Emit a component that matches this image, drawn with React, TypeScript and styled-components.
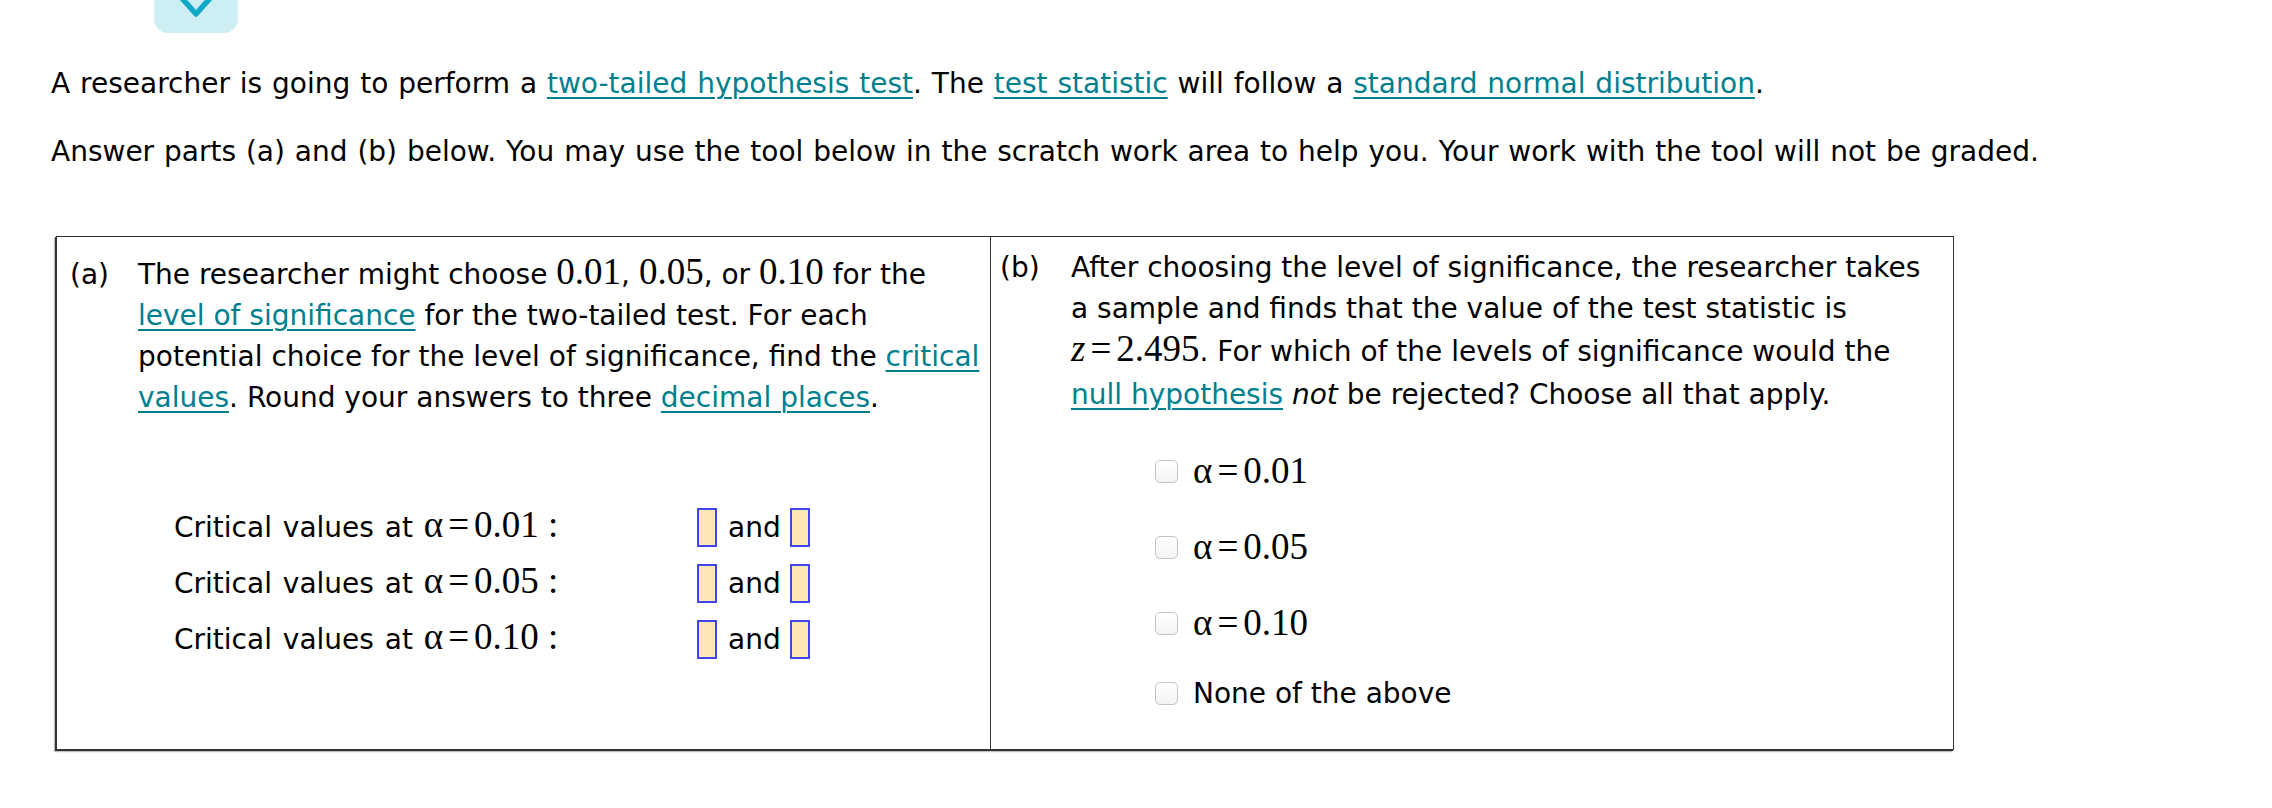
import React from 'react';
import styled, { createGlobalStyle } from 'styled-components';

const GlobalStyle = createGlobalStyle`
    html, body {
        margin: 0;
        padding: 0;
        background: #ffffff;
    }
    body {
        font-family: "DejaVu Sans", Verdana, sans-serif;
        color: #000000;
    }
`;

const Page = styled.div`
    width: 2272px;
    height: 808px;
    overflow: hidden;
    box-sizing: border-box;
    padding-left: 51px;
    font-size: 28px;
`;

const CollapseButton = styled.div`
    width: 84px;
    height: 33px;
    margin-left: 103px;
    background: #cdeef3;
    border-radius: 0 0 14px 14px;
    display: flex;
    justify-content: center;
    align-items: flex-start;
`;

const Intro = styled.p`
    margin: ${({ $top }: { $top: number }) => `${$top}px`} 0 0;
    line-height: 40px;
    white-space: nowrap;
    word-spacing: 1px;
`;

const Link = styled.span`
    color: #00808f;
    text-decoration: underline;
    text-decoration-thickness: 2px;
    text-underline-offset: 4px;
`;

const Math = styled.span`
    font-family: "Liberation Serif", "Times New Roman", serif;
    font-size: 37px;
    line-height: 0;
    word-spacing: 0;
    & > i {
        font-style: italic;
    }
`;

const Eq = styled.span`
    margin: 0 5px;
`;

const Table = styled.div`
    margin: 64px 0 0 5px;
    width: 1898px;
    height: 514px;
    box-sizing: border-box;
    display: grid;
    grid-template-columns: 933px 1fr;
    border: 1px solid #333333;
    box-shadow: -1px 1px 0 #333333, -2px 2px 1px rgba(0, 0, 0, 0.25);
`;

const Cell = styled.div`
    box-sizing: border-box;
    padding: ${({ $top, $left }: { $top: number; $left: number }) => `${$top}px 0 0 ${$left}px`};
    & + & {
        border-left: 1px solid #333333;
    }
`;

const Part = styled.div`
    display: flex;
    align-items: flex-start;
`;

const PartLabel = styled.div`
    width: ${({ $w }: { $w: number }) => `${$w}px`};
    flex-shrink: 0;
    height: 41px;
    line-height: 41px;
`;

const Line = styled.div`
    height: ${({ $h }: { $h?: number }) => `${$h ?? 41}px`};
    line-height: ${({ $h }: { $h?: number }) => `${$h ?? 41}px`};
    white-space: nowrap;
`;

const Rows = styled.div`
    margin: 81px 0 0 104px;
    display: flex;
    flex-direction: column;
`;

const Row = styled.div`
    height: 56px;
    display: grid;
    grid-template-columns: 523px auto;
    align-items: center;
    white-space: nowrap;
    word-spacing: 2px;
`;

const Pair = styled.div`
    display: flex;
    align-items: center;
    word-spacing: 0;
`;

const AnswerBox = styled.span`
    display: inline-block;
    width: 20px;
    height: 39px;
    box-sizing: border-box;
    border: 2px solid #3d45ee;
    background: #fde8b4;
`;

const And = styled.span`
    margin: 0 9px 0 11px;
`;

const Options = styled.div`
    margin: 18px 0 0 155px;
    display: flex;
    flex-direction: column;
`;

const Option = styled.label`
    height: ${({ $h }: { $h: number }) => `${$h}px`};
    display: flex;
    align-items: center;
    gap: 15px;
    white-space: nowrap;
`;

const Check = styled.span`
    width: 23px;
    height: 23px;
    box-sizing: border-box;
    border: 1px solid #c4c4c4;
    border-radius: 5px;
    background: linear-gradient(#ffffff, #f3f3f3);
    flex-shrink: 0;
`;

function Alpha({ value, colon }: { value: string; colon?: boolean }) {
    return (
        <Math>
            α<Eq>=</Eq>{value}{colon ? ' :' : ''}
        </Math>
    );
}

export default function App() {
    const levels = ['0.01', '0.05', '0.10'];
    return (
        <Page>
            <GlobalStyle />
            <CollapseButton>
                <svg width="38" height="22" viewBox="0 0 38 22">
                    <path d="M3 -4 L19 14 L35 -4" fill="none" stroke="#14a8c7" strokeWidth="5.5" strokeLinecap="round" strokeLinejoin="round" />
                </svg>
            </CollapseButton>
            <Intro $top={31}>
                A researcher is going to perform a <Link>two-tailed hypothesis test</Link>. The <Link>test statistic</Link> will follow a <Link>standard normal distribution</Link>.
            </Intro>
            <Intro $top={28}>
                Answer parts (a) and (b) below. You may use the tool below in the scratch work area to help you. Your work with the tool will not be graded.
            </Intro>
            <Table>
                <Cell $top={17} $left={13}>
                    <Part>
                        <PartLabel $w={68}>(a)</PartLabel>
                        <div>
                            <Line>
                                The researcher might choose <Math>0.01</Math>, <Math>0.05</Math>, or <Math>0.10</Math> for the
                            </Line>
                            <Line>
                                <Link>level of significance</Link> for the two-tailed test. For each
                            </Line>
                            <Line>
                                potential choice for the level of significance, find the <Link>critical</Link>
                            </Line>
                            <Line>
                                <Link>values</Link>. Round your answers to three <Link>decimal places</Link>.
                            </Line>
                        </div>
                    </Part>
                    <Rows>
                        {levels.map(level => (
                            <Row key={level}>
                                <span>Critical values at <Alpha value={level} colon /></span>
                                <Pair>
                                    <AnswerBox />
                                    <And>and</And>
                                    <AnswerBox />
                                </Pair>
                            </Row>
                        ))}
                    </Rows>
                </Cell>
                <Cell $top={10} $left={9}>
                    <Part>
                        <PartLabel $w={71}>(b)</PartLabel>
                        <div>
                            <Line>After choosing the level of significance, the researcher takes</Line>
                            <Line>a sample and finds that the value of the test statistic is</Line>
                            <Line $h={45}>
                                <Math><i>z</i><Eq>=</Eq>2.495</Math>. For which of the levels of significance would the
                            </Line>
                            <Line>
                                <Link>null hypothesis</Link> <i>not</i> be rejected? Choose all that apply.
                            </Line>
                        </div>
                    </Part>
                    <Options>
                        {levels.map(level => (
                            <Option key={level} $h={76}>
                                <Check />
                                <Alpha value={level} />
                            </Option>
                        ))}
                        <Option $h={64}>
                            <Check />
                            None of the above
                        </Option>
                    </Options>
                </Cell>
            </Table>
        </Page>
    );
}
